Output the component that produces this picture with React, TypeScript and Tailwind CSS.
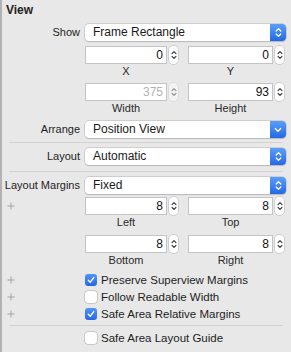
import React from "react";

const font = { fontFamily: '"Liberation Sans", Arial, sans-serif' };

function UpDown({ color = "#fff", w = 7, h = 11 }: { color?: string; w?: number; h?: number }) {
  return (
    <svg width={w} height={h} viewBox="0 0 7 11" fill="none">
      <path d="M1.2 4 L3.5 1.6 L5.8 4" stroke={color} strokeWidth="1.3" strokeLinecap="round" strokeLinejoin="round" />
      <path d="M1.2 7 L3.5 9.4 L5.8 7" stroke={color} strokeWidth="1.3" strokeLinecap="round" strokeLinejoin="round" />
    </svg>
  );
}

function Down() {
  return (
    <svg width="8" height="6" viewBox="0 0 8 6" fill="none">
      <path d="M1.3 1.6 L4 4.3 L6.7 1.6" stroke="#fff" strokeWidth="1.4" strokeLinecap="round" strokeLinejoin="round" />
    </svg>
  );
}

function Popup({ text, single = false }: { text: string; single?: boolean }) {
  return (
    <div className="flex h-[17px] w-[201px] items-stretch rounded-[4px] bg-white shadow-[0_0_0_0.5px_#b9b9b9,0_0.5px_1px_rgba(0,0,0,0.2)]">
      <div className="flex flex-1 items-center pl-[8px] text-[12px] leading-[17px] text-[#1a1a1a]">{text}</div>
      <div className="flex w-[16px] items-center justify-center rounded-r-[4px] bg-gradient-to-b from-[#5b9ef9] to-[#2468e6]">
        {single ? <Down /> : <UpDown />}
      </div>
    </div>
  );
}

function Stepper({ disabled = false }: { disabled?: boolean }) {
  return (
    <div
      className={`flex h-[18px] w-[9px] items-center justify-center rounded-[4px] bg-white shadow-[0_0_0_0.5px_#b5b5b5] ${
        disabled ? "opacity-50" : ""
      }`}
    >
      <UpDown color="#333" w={6} h={10} />
    </div>
  );
}

function Field({ value, label, w, disabled = false }: { value: string; label: string; w: number; disabled?: boolean }) {
  return (
    <div className="flex flex-col">
      <div className="flex items-center gap-[2px]">
        <div
          style={{ width: w }}
          className={`flex h-[18px] items-center justify-end border border-[#c4c4c4] bg-white pr-[3px] text-[12px] leading-[16px] ${
            disabled ? "text-[#b3b3b3]" : "text-[#111]"
          }`}
        >
          {value}
        </div>
        <Stepper disabled={disabled} />
      </div>
      <div style={{ width: w }} className="mt-[1px] h-[13px] text-center text-[11px] leading-[13px] text-[#2a2a2a]">
        {label}
      </div>
    </div>
  );
}

function FieldPair({ a, b }: { a: [string, string, boolean?]; b: [string, string] }) {
  return (
    <div className="flex pl-[83px]">
      <Field value={a[0]} label={a[1]} w={82} disabled={a[2]} />
      <div className="ml-[10px]">
        <Field value={b[0]} label={b[1]} w={85} />
      </div>
    </div>
  );
}

function Row({ label, children }: { label: string; children: React.ReactNode }) {
  return (
    <div className="flex h-[17px] items-center">
      <div className="w-[83px] whitespace-nowrap pr-[5px] text-right text-[11px] leading-[17px] text-[#1e1e1e]">{label}</div>
      {children}
    </div>
  );
}

function PlusIcon() {
  return (
    <svg width="8" height="8" viewBox="0 0 8 8">
      <path d="M4 0.5 V7.5 M0.5 4 H7.5" stroke="#a4a4a4" strokeWidth="1" />
    </svg>
  );
}

function Check({ checked }: { checked: boolean }) {
  return checked ? (
    <div className="flex h-[12px] w-[12px] items-center justify-center rounded-[3px] bg-gradient-to-b from-[#4f95f8] to-[#2866e4]">
      <svg width="8" height="8" viewBox="0 0 8 8" fill="none">
        <path d="M1.3 4.2 L3.2 6.2 L6.8 1.6" stroke="#fff" strokeWidth="1.4" strokeLinecap="round" strokeLinejoin="round" />
      </svg>
    </div>
  ) : (
    <div className="h-[12px] w-[12px] rounded-[3px] bg-white shadow-[0_0_0_0.5px_#a9a9a9]" />
  );
}

function CheckRow({ text, checked, plus = true }: { text: string; checked: boolean; plus?: boolean }) {
  return (
    <div className="flex h-[12px] items-center">
      <div className="flex w-[83px] items-center pl-[5px]">{plus ? <PlusIcon /> : null}</div>
      <Check checked={checked} />
      <span className="ml-[4px] whitespace-nowrap text-[11.5px] leading-[12px] text-[#1e1e1e]">{text}</span>
    </div>
  );
}

function Sep() {
  return <div className="ml-[7px] h-px w-[274px] bg-[#d2d2d2]" />;
}

export default function App() {
  return (
    <div style={font} className="h-[352px] w-[291px] overflow-hidden border-l-2 border-[#b2b2b2] bg-[#e8e8e8]">
      <div className="pl-[4px] pt-[3px] text-[12px] font-bold leading-[14px] text-[#222]">View</div>
      <div className="mt-[7px]">
        <Row label="Show">
          <Popup text="Frame Rectangle" />
        </Row>
      </div>
      <div className="mt-[5px]">
        <FieldPair a={["0", "X"]} b={["0", "Y"]} />
      </div>
      <div className="mt-[5px]">
        <FieldPair a={["375", "Width", true]} b={["93", "Height"]} />
      </div>
      <div className="mt-[6px]">
        <Row label="Arrange">
          <Popup text="Position View" single />
        </Row>
      </div>
      <div className="mt-[4px]">
        <Sep />
      </div>
      <div className="mt-[5px]">
        <Row label="Layout">
          <Popup text="Automatic" />
        </Row>
      </div>
      <div className="mt-[6px]">
        <Sep />
      </div>
      <div className="mt-[5px]">
        <Row label="Layout Margins">
          <Popup text="Fixed" />
        </Row>
      </div>
      <div className="mt-[3px] flex">
        <div className="w-0">
          <div className="ml-[5px] mt-[5px]">
            <PlusIcon />
          </div>
        </div>
        <FieldPair a={["8", "Left"]} b={["8", "Top"]} />
      </div>
      <div className="mt-[6px]">
        <FieldPair a={["8", "Bottom"]} b={["8", "Right"]} />
      </div>
      <div className="mt-[7px] flex flex-col gap-[5px]">
        <CheckRow text="Preserve Superview Margins" checked />
        <CheckRow text="Follow Readable Width" checked={false} />
        <CheckRow text="Safe Area Relative Margins" checked />
      </div>
      <div className="mt-[5px]">
        <Sep />
      </div>
      <div className="mt-[6px]">
        <CheckRow text="Safe Area Layout Guide" checked={false} plus={false} />
      </div>
    </div>
  );
}
